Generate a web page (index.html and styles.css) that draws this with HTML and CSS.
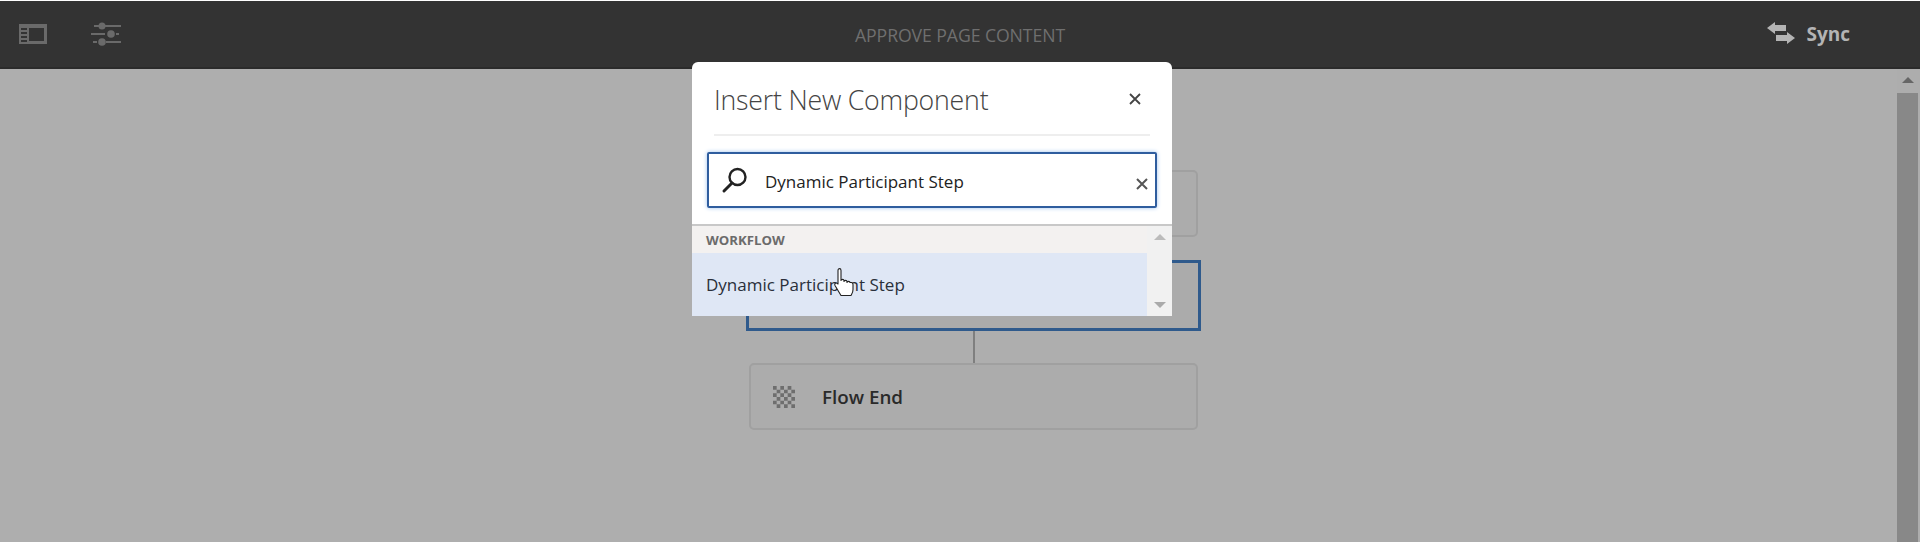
FILE: index.html
```html
<!DOCTYPE html>
<html lang="en">
<head>
<meta charset="utf-8">
<title>Approve Page Content</title>
<link rel="stylesheet" href="styles.css">
</head>
<body>
<div class="page">
  <header class="topbar">
    <div class="tools">
      <svg class="tool-icon" width="28" height="22" viewBox="0 0 28 22"><path fill="#6a6a6a" d="M0 1h28v20H0zM10 5v13h15V5zM2 5v2h6V5zm0 4v2h6V9zm0 4v2h6v-2zm0 4v2h6v-2z" fill-rule="evenodd"/></svg>
      <svg class="tool-icon" width="30" height="24" viewBox="0 0 30 24"><g fill="#6a6a6a"><rect x="3" y="3" width="5" height="2"/><rect x="14" y="3" width="16" height="2"/><circle cx="11" cy="4" r="3.5"/><rect y="11" width="14" height="2"/><rect x="25" y="11" width="3" height="2"/><circle cx="20" cy="12" r="3.8"/><rect x="2" y="19" width="4" height="2"/><rect x="15" y="19" width="15" height="2"/><circle cx="11" cy="20" r="3.8"/></g></svg>
    </div>
    <div class="bar-title">APPROVE PAGE CONTENT</div>
    <div class="sync">
      <svg width="28" height="24" viewBox="0 0 28 24"><path fill="#b4b4b4" d="M0 6 8 0v3h11v6H8v3zM28 16l-8-6v3H9v6h11v3z"/></svg>
      <span>Sync</span>
    </div>
  </header>
  <main class="workspace">
    <div class="canvas">
      <div class="flow">
        <div class="card card-first"></div>
        <div class="card card-selected"></div>
        <div class="connector"></div>
        <div class="card card-end">
          <svg width="22" height="22" viewBox="0 0 6 6" class="checker"><path fill="#6e6e6e" d="M0 0h1v1H0zM2 0h1v1H2zM4 0h1v1H4zM1 1h1v1H1zM3 1h1v1H3zM5 1h1v1H5zM0 2h1v1H0zM2 2h1v1H2zM4 2h1v1H4zM1 3h1v1H1zM3 3h1v1H3zM5 3h1v1H5zM0 4h1v1H0zM2 4h1v1H2zM4 4h1v1H4zM1 5h1v1H1zM3 5h1v1H3zM5 5h1v1H5z"/></svg>
          <span>Flow End</span>
        </div>
      </div>
    </div>
    <div class="page-scroll">
      <div class="arrow-up"></div>
      <div class="thumb"></div>
    </div>
  </main>
  <section class="dialog">
    <div class="dialog-head">
      <h1>Insert New Component</h1>
      <svg class="close" width="12" height="12" viewBox="0 0 12 12"><path d="M1 1l10 10M11 1 1 11" stroke="#444" stroke-width="1.8"/></svg>
    </div>
    <div class="search">
      <svg width="28" height="28" viewBox="0 0 28 28"><circle cx="16.5" cy="11" r="8" fill="none" stroke="#222" stroke-width="2.400"/><path d="M11 17 3 25" stroke="#222" stroke-width="3" stroke-linecap="round"/></svg>
      <span class="query">Dynamic Participant Step</span>
      <svg class="clear" width="12" height="12" viewBox="0 0 12 12"><path d="M1 1l10 10M11 1 1 11" stroke="#555" stroke-width="2"/></svg>
    </div>
    <div class="results">
      <div class="list">
        <div class="group">WORKFLOW</div>
        <div class="item">Dynamic Participant Step</div>
      </div>
      <div class="list-scroll">
        <div class="mini-up"></div>
        <div class="mini-down"></div>
      </div>
    </div>
  </section>
  <svg class="hand" width="22" height="33" viewBox="0 0 22 32"><path fill="#fff" stroke="#222" stroke-width="1.1" stroke-linejoin="round" d="M5 3c0-2.500 3-2.500 3 0v10c0-1.500 3-1.500 3 0v1c0-1.500 3-1.500 3 0v1c0-1.500 3-1.500 3 0 0 0 3-.5 3 2v5c0 3-1 4-2 6H8l-6-10c-1-2 1-3.500 3-1.500z"/></svg>
</div>
</body>
</html>
```
FILE: styles.css
```css
* { box-sizing: border-box; }
html, body { margin: 0; height: 100%; overflow: hidden; }
body { font-family: "Open Sans", "Noto Sans", sans-serif; color: #222; }
.page { position: relative; height: 542px; width: 1920px; display: flex; flex-direction: column; background: #fff; padding-top: 1px; }
.topbar { height: 68px; flex: none; background: #333; border-bottom: 2px solid #2b2b2b; display: grid; grid-template-columns: 1fr auto 1fr; align-items: center; }
.tools { display: flex; gap: 44px; align-items: center; padding-left: 19px; }
.bar-title { font-size: 17.7px; color: #6f6f6f; letter-spacing: -.1px; padding-top: 2px; }
.sync { justify-self: end; display: flex; align-items: center; gap: 10px; padding-right: 70px; color: #b4b4b4; font-weight: 700; font-size: 19px; }
.sync svg { margin-right: 1px; }
.workspace { flex: 1; display: flex; background: #aeaeae; min-height: 0; }
.canvas { flex: 1; display: flex; justify-content: center; padding-top: 101px; padding-left: 50px; }
.flow { width: 449px; display: flex; flex-direction: column; align-items: center; }
.card { width: 449px; height: 67px; border: 2px solid #a0a0a0; border-radius: 5px; background: #acacac; flex: none; }
.card-selected { width: 455px; height: 71px; margin-top: 23px; border: 3px solid #2f5a8c; border-radius: 0; background: #ababab; }
.connector { width: 2px; height: 32px; background: #7f7f7f; flex: none; }
.card-end { display: flex; align-items: center; gap: 27px; padding-left: 22px; font-weight: 600; font-size: 18.800px; color: #2a2a2a; }
.page-scroll { width: 23px; background: #adadad; display: flex; flex-direction: column; align-items: center; padding: 8px 2px 0 0; }
.arrow-up { width: 0; height: 0; border: 6px solid transparent; border-top: 0; border-bottom: 6px solid #666; }
.thumb { flex: 1; width: 21px; margin-top: 10px; background: #888; }
.dialog { position: absolute; left: 692px; top: 62px; width: 480px; height: 254px; background: #fff; border-radius: 6px 6px 0 0; display: flex; flex-direction: column; }
.dialog-head { margin: 0 22px; height: 74px; padding: 2px 9px 0 0; display: flex; align-items: center; justify-content: space-between; border-bottom: 2px solid #eee; }
.dialog-head h1 { margin: 0; font-weight: 300; font-size: 26.700px; color: #444; letter-spacing: -.2px; }
.search { margin: 16px 15px 0; height: 56px; border: 2px solid #2f5d9e; border-radius: 2px; box-shadow: 0 0 4px #9fc3ee; display: flex; align-items: center; padding: 0 0 0 12px; gap: 16px; position: relative; }
.query { font-size: 17px; color: #222; padding-top: 2px; }
.clear { position: absolute; right: 7px; top: 24px; }
.results { margin-top: 16px; flex: 1; display: flex; border-top: 2px solid #c8c8c8; background: #f1f1f1; min-height: 0; }
.list { flex: 1; display: flex; flex-direction: column; }
.group { height: 27px; padding: 5px 14px 0; font-size: 13.200px; font-weight: 700; color: #6b6b6b; background: #f3f1f0; }
.item { flex: 1; background: #dfe7f5; padding: 20px 14px 0; font-size: 17px; color: #2a2f3a; }
.list-scroll { width: 25px; background: #f1f1f1; display: flex; flex-direction: column; justify-content: space-between; align-items: center; padding: 8px 0 8px; }
.mini-up { width: 0; height: 0; border: 6px solid transparent; border-top: 0; border-bottom: 6px solid #bbb; }
.mini-down { width: 0; height: 0; border: 6px solid transparent; border-bottom: 0; border-top: 6px solid #aaa; }
.hand { position: absolute; left: 833px; top: 267px; }
```
